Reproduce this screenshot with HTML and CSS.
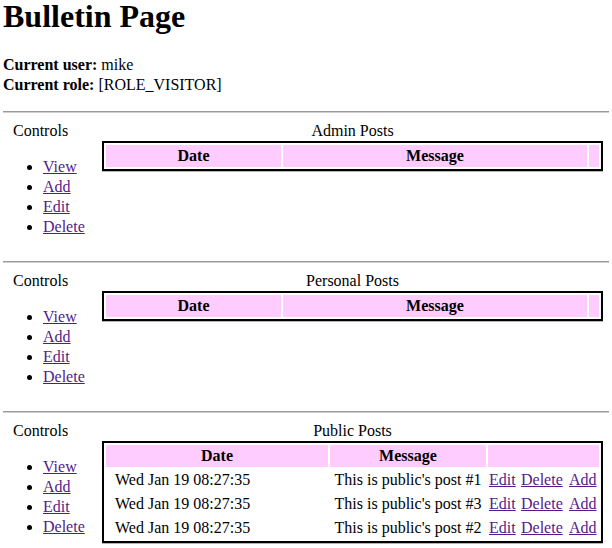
FILE: index.html
```html
<!DOCTYPE html>
<html>
<head>
<meta charset="utf-8">
<title>Bulletin Page</title>
<link rel="stylesheet" href="styles.css">
</head>
<body>
<h1 class="page-title">Bulletin Page</h1>
<p class="user-info"><b>Current user:</b> mike<br><b>Current role:</b> [ROLE_VISITOR]</p>

<hr class="divider">
<section class="board">
  <div class="controls">
    <div class="controls-title">Controls</div>
    <ul class="controls-list">
      <li><a href="#">View</a></li>
      <li><a href="#">Add</a></li>
      <li><a href="#">Edit</a></li>
      <li><a href="#">Delete</a></li>
    </ul>
  </div>
  <div class="posts">
    <div class="posts-title">Admin Posts</div>
    <table class="posts-table empty">
      <colgroup><col class="c-date"><col class="c-msg"><col class="c-act"><col class="c-act"><col class="c-act"></colgroup>
      <thead><tr><th>Date</th><th>Message</th><th colspan="3"></th></tr></thead>
    </table>
  </div>
</section>

<hr class="divider">
<section class="board">
  <div class="controls">
    <div class="controls-title">Controls</div>
    <ul class="controls-list">
      <li><a href="#">View</a></li>
      <li><a href="#">Add</a></li>
      <li><a href="#">Edit</a></li>
      <li><a href="#">Delete</a></li>
    </ul>
  </div>
  <div class="posts">
    <div class="posts-title">Personal Posts</div>
    <table class="posts-table empty">
      <colgroup><col class="c-date"><col class="c-msg"><col class="c-act"><col class="c-act"><col class="c-act"></colgroup>
      <thead><tr><th>Date</th><th>Message</th><th colspan="3"></th></tr></thead>
    </table>
  </div>
</section>

<hr class="divider">
<section class="board">
  <div class="controls">
    <div class="controls-title">Controls</div>
    <ul class="controls-list">
      <li><a href="#">View</a></li>
      <li><a href="#">Add</a></li>
      <li><a href="#">Edit</a></li>
      <li><a href="#">Delete</a></li>
    </ul>
  </div>
  <div class="posts">
    <div class="posts-title">Public Posts</div>
    <table class="posts-table filled">
      <colgroup><col class="c-date"><col class="c-msg"><col class="c-edit"><col class="c-del"><col class="c-add"></colgroup>
      <thead><tr><th>Date</th><th>Message</th><th colspan="3"></th></tr></thead>
      <tbody>
        <tr><td class="date">Wed Jan 19 08:27:35</td><td class="msg">This is public's post #1</td><td><a href="#">Edit</a></td><td><a href="#">Delete</a></td><td><a href="#">Add</a></td></tr>
        <tr><td class="date">Wed Jan 19 08:27:35</td><td class="msg">This is public's post #3</td><td><a href="#">Edit</a></td><td><a href="#">Delete</a></td><td><a href="#">Add</a></td></tr>
        <tr><td class="date">Wed Jan 19 08:27:35</td><td class="msg">This is public's post #2</td><td><a href="#">Edit</a></td><td><a href="#">Delete</a></td><td><a href="#">Add</a></td></tr>
      </tbody>
    </table>
  </div>
</section>
</body>
</html>
```
FILE: styles.css
```css
html, body {
  background: #fff;
}
body {
  margin: 0 3px;
  font-family: "Liberation Serif", "Times New Roman", serif;
  font-size: 16px;
  line-height: 20px;
  color: #000;
}
a {
  color: #551a8b;
  text-decoration: underline;
}
.page-title {
  font-size: 32px;
  line-height: 32px;
  font-weight: bold;
  margin: 0 0 23px;
}
.user-info {
  margin: 0 0 16px;
}
.divider {
  height: 0;
  margin: 16px 0 8px;
  border: 0;
  border-top: 1px solid #9a9a9a;
  border-bottom: 1px solid #cfcfcf;
}
.board {
  display: flex;
  align-items: flex-start;
}
.board + .divider {
  margin-top: 8px;
}
.controls {
  width: 99px;
  box-sizing: border-box;
  padding-left: 10px;
  flex: none;
}
.controls-list {
  margin: 16px 0;
  padding-left: 30px;
}
.posts {
  width: 501px;
  flex: none;
}
.posts-title {
  text-align: center;
}
.posts-table {
  width: 501px;
  table-layout: fixed;
  border: 2px solid #000;
  border-spacing: 2px;
  box-shadow: 0 1px 0 #b4b4b4;
}
.posts-table th,
.posts-table td {
  padding: 1px;
  line-height: 20px;
  white-space: nowrap;
}
.posts-table th {
  background: #ffccff;
  font-weight: bold;
  text-align: center;
}
.posts-table td {
  text-align: left;
}
.posts-table td.date {
  padding-left: 9px;
}
.posts-table td.msg {
  text-align: center;
}
.empty .c-date { width: 175px; }
.empty .c-msg { width: 304px; }
.empty .c-act { width: 2px; }
.filled .c-date { width: 222px; }
.filled .c-msg { width: 156px; }
.filled .c-edit { width: 30px; }
.filled .c-del { width: 46px; }
.filled .c-add { width: 31px; }
```
